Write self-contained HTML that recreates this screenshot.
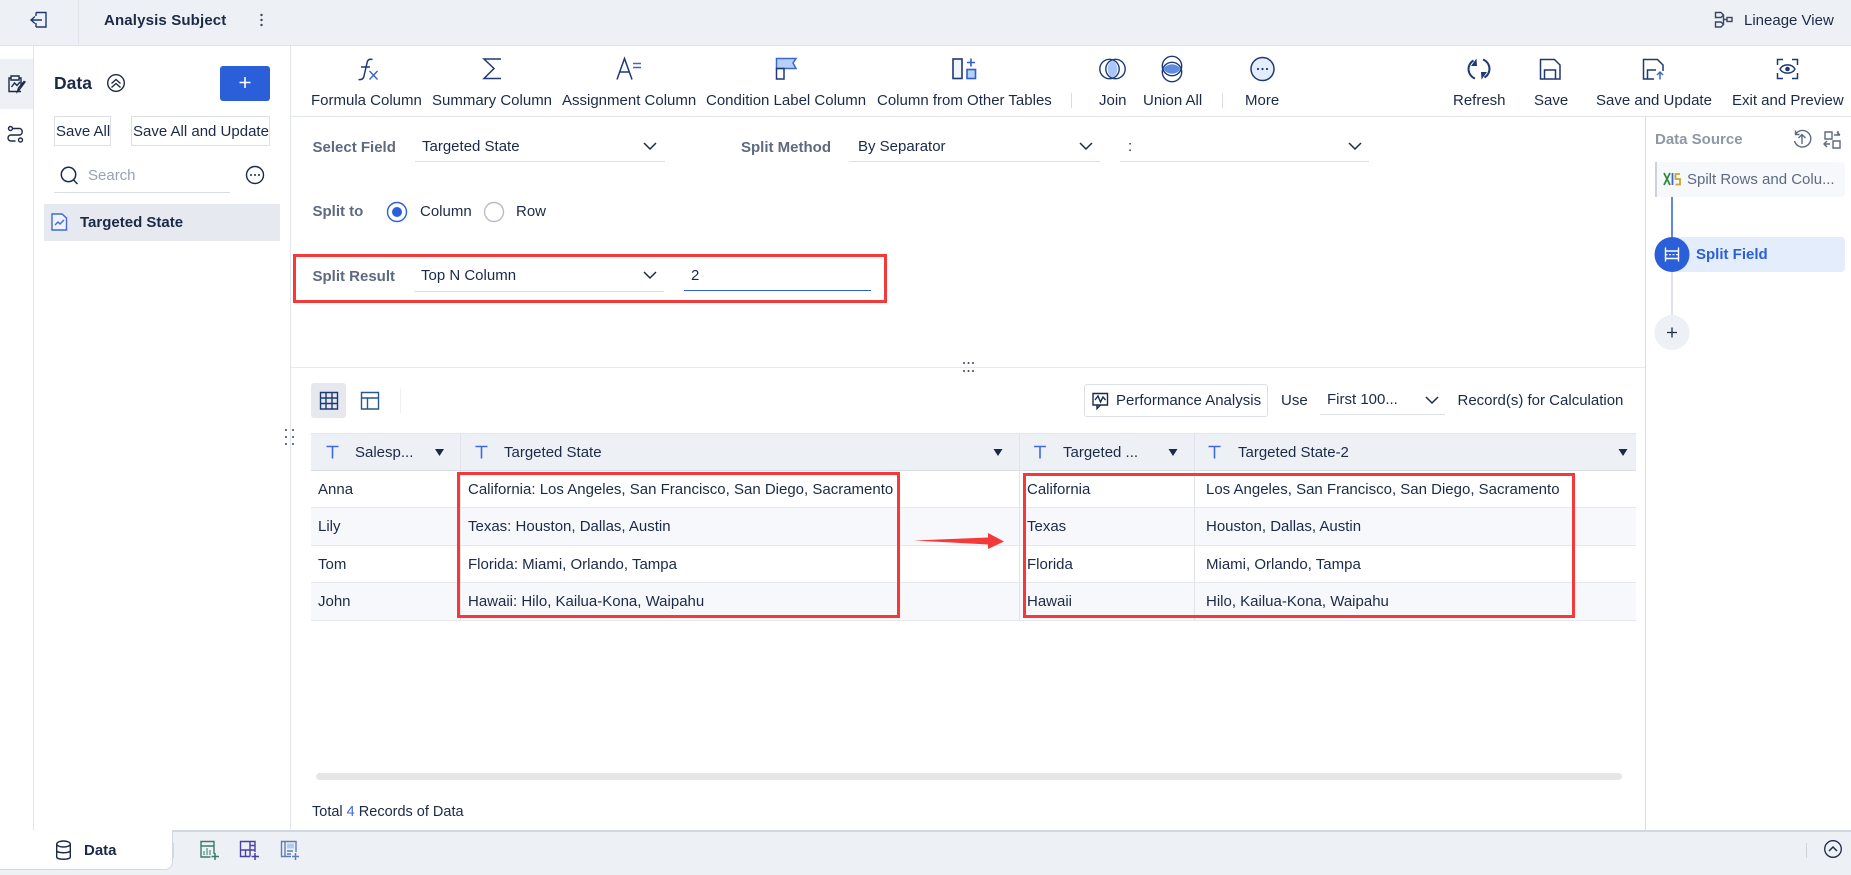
<!DOCTYPE html>
<html><head><meta charset="utf-8"><title>Analysis Subject</title>
<style>
html,body{margin:0;padding:0;width:1851px;height:875px;overflow:hidden;background:#fff}
body{position:relative;font-family:"Liberation Sans",Arial,sans-serif;font-size:15px;color:#1b2a47}
.t{position:absolute;line-height:20px;white-space:nowrap}
.b{font-weight:bold}
.l{font-weight:bold;color:#5d6a80;font-size:15px}
.r{position:absolute;box-sizing:border-box}
svg{position:absolute;left:0;top:0}
</style></head><body>
<!-- backgrounds -->
<div class="r" style="left:0;top:0;width:1851px;height:46px;background:#edf0f5;border-bottom:1px solid #e0e3ea"></div>
<div class="r" style="left:78px;top:0;width:1px;height:46px;background:#e0e3ea"></div>
<div class="r" style="left:0;top:59px;width:33px;height:50px;background:#edf0f5"></div>
<div class="r" style="left:33px;top:46px;width:1px;height:784px;background:#e3e5ec"></div>
<div class="r" style="left:290px;top:46px;width:1px;height:784px;background:#e3e5ec"></div>
<div class="r" style="left:291px;top:116px;width:1560px;height:1px;background:#e3e5ec"></div>
<div class="r" style="left:1645px;top:117px;width:1px;height:713px;background:#d9dce4"></div>
<div class="r" style="left:291px;top:367px;width:1354px;height:1px;background:#e6e8ee"></div>
<!-- header -->
<div class="t b" style="left:104px;top:11px;letter-spacing:.15px">Analysis Subject</div>
<div class="t" style="left:1744px;top:11px">Lineage View</div>
<!-- sidebar -->
<div class="t b" style="left:54px;top:73px;font-size:17.5px">Data</div>
<div class="r" style="left:220px;top:66px;width:50px;height:35px;background:#2b5fd9;border-radius:3px"></div>
<div class="r" style="left:54px;top:116px;width:57px;height:30px;border:1px solid #dcdfe6"></div>
<div class="t" style="left:56px;top:122px">Save All</div>
<div class="r" style="left:131px;top:116px;width:139px;height:30px;border:1px solid #dcdfe6"></div>
<div class="t" style="left:133px;top:122px">Save All and Update</div>
<div class="t" style="left:88px;top:166px;color:#9aa2b1">Search</div>
<div class="r" style="left:54px;top:192px;width:176px;height:1px;background:#d9dce4"></div>
<div class="r" style="left:44px;top:204px;width:236px;height:37px;background:#e6e9f0"></div>
<div class="t b" style="left:80px;top:213px;font-size:15px">Targeted State</div>
<!-- toolbar labels -->
<div class="t" style="left:311px;top:91px">Formula Column</div>
<div class="t" style="left:432px;top:91px">Summary Column</div>
<div class="t" style="left:562px;top:91px">Assignment Column</div>
<div class="t" style="left:706px;top:91px">Condition Label Column</div>
<div class="t" style="left:877px;top:91px">Column from Other Tables</div>
<div class="r" style="left:1071px;top:93px;width:1px;height:15px;background:#d9dce4"></div>
<div class="t" style="left:1099px;top:91px">Join</div>
<div class="t" style="left:1143px;top:91px">Union All</div>
<div class="r" style="left:1222px;top:93px;width:1px;height:15px;background:#d9dce4"></div>
<div class="t" style="left:1245px;top:91px">More</div>
<div class="t" style="left:1453px;top:91px">Refresh</div>
<div class="t" style="left:1534px;top:91px">Save</div>
<div class="t" style="left:1596px;top:91px">Save and Update</div>
<div class="t" style="left:1732px;top:91px">Exit and Preview</div>
<!-- form -->
<div class="t l" style="left:312.5px;top:138px">Select Field</div>
<div class="t" style="left:422px;top:137px">Targeted State</div>
<div class="r" style="left:415px;top:161px;width:250px;height:1px;background:#dcdfe6"></div>
<div class="t l" style="left:741px;top:138px">Split Method</div>
<div class="t" style="left:858px;top:137px">By Separator</div>
<div class="r" style="left:849px;top:161px;width:251px;height:1px;background:#dcdfe6"></div>
<div class="t" style="left:1128px;top:137px">:</div>
<div class="r" style="left:1120px;top:161px;width:249px;height:1px;background:#dcdfe6"></div>
<div class="t l" style="left:312.5px;top:202px">Split to</div>
<div class="t" style="left:420px;top:202px">Column</div>
<div class="t" style="left:516px;top:202px">Row</div>
<div class="t l" style="left:312.5px;top:267px">Split Result</div>
<div class="t" style="left:421px;top:266px">Top N Column</div>
<div class="r" style="left:414px;top:291px;width:250px;height:1px;background:#dcdfe6"></div>
<div class="t" style="left:691px;top:266px">2</div>
<div class="r" style="left:684px;top:290px;width:187px;height:1px;background:#2b5fd9"></div>
<!-- grid tools -->
<div class="r" style="left:311px;top:383px;width:35px;height:35px;background:#e6e8ee;border-radius:3px"></div>
<div class="r" style="left:400px;top:388px;width:1px;height:25px;background:#eef0f4"></div>
<div class="r" style="left:1084px;top:384px;width:184px;height:33px;border:1px solid #dcdfe6;border-radius:3px"></div>
<div class="t" style="left:1116px;top:391px">Performance Analysis</div>
<div class="t" style="left:1281px;top:391px">Use</div>
<div class="t" style="left:1327px;top:390px">First 100...</div>
<div class="r" style="left:1320px;top:414px;width:125px;height:1px;background:#dcdfe6"></div>
<div class="t" style="left:1457.5px;top:391px">Record(s) for Calculation</div>
<!-- table -->
<div class="r" style="left:311px;top:433px;width:1325px;height:38px;background:#edf0f5;border-top:1px solid #e3e6ec;border-bottom:1px solid #d9dce4"></div>
<div class="r" style="left:311px;top:508px;width:1325px;height:37px;background:#f7f8fc"></div>
<div class="r" style="left:311px;top:583px;width:1325px;height:37px;background:#f7f8fc"></div>
<div class="r" style="left:311px;top:507px;width:1325px;height:1px;background:#e6e8ee"></div>
<div class="r" style="left:311px;top:545px;width:1325px;height:1px;background:#e6e8ee"></div>
<div class="r" style="left:311px;top:582px;width:1325px;height:1px;background:#e6e8ee"></div>
<div class="r" style="left:311px;top:620px;width:1325px;height:1px;background:#e6e8ee"></div>
<div class="r" style="left:460px;top:433px;width:1px;height:188px;background:#e0e3ea"></div>
<div class="r" style="left:1019px;top:433px;width:1px;height:188px;background:#e0e3ea"></div>
<div class="r" style="left:1194px;top:433px;width:1px;height:188px;background:#e0e3ea"></div>
<div class="t" style="left:355px;top:443px">Salesp...</div>
<div class="t" style="left:504px;top:443px">Targeted State</div>
<div class="t" style="left:1063px;top:443px">Targeted ...</div>
<div class="t" style="left:1238px;top:443px">Targeted State-2</div>
<div class="t" style="left:318px;top:480px">Anna</div>
<div class="t" style="left:318px;top:517px">Lily</div>
<div class="t" style="left:318px;top:555px">Tom</div>
<div class="t" style="left:318px;top:592px">John</div>
<div class="t" style="left:468px;top:480px">California: Los Angeles, San Francisco, San Diego, Sacramento</div>
<div class="t" style="left:468px;top:517px">Texas: Houston, Dallas, Austin</div>
<div class="t" style="left:468px;top:555px">Florida: Miami, Orlando, Tampa</div>
<div class="t" style="left:468px;top:592px">Hawaii: Hilo, Kailua-Kona, Waipahu</div>
<div class="t" style="left:1027px;top:480px">California</div>
<div class="t" style="left:1027px;top:517px">Texas</div>
<div class="t" style="left:1027px;top:555px">Florida</div>
<div class="t" style="left:1027px;top:592px">Hawaii</div>
<div class="t" style="left:1206px;top:480px">Los Angeles, San Francisco, San Diego, Sacramento</div>
<div class="t" style="left:1206px;top:517px">Houston, Dallas, Austin</div>
<div class="t" style="left:1206px;top:555px">Miami, Orlando, Tampa</div>
<div class="t" style="left:1206px;top:592px">Hilo, Kailua-Kona, Waipahu</div>
<!-- red boxes -->
<div class="r" style="left:293px;top:254px;width:594px;height:49px;border:3px solid #f53838"></div>
<div class="r" style="left:457px;top:472px;width:443px;height:146px;border:3px solid #f53838"></div>
<div class="r" style="left:1023px;top:473px;width:552px;height:145px;border:3px solid #f53838"></div>
<!-- footer of table -->
<div class="r" style="left:316px;top:773px;width:1306px;height:7px;background:#e6e6e6;border-radius:4px"></div>
<div class="t" style="left:312px;top:802px;font-size:14.5px">Total <span style="color:#3f67d8">4</span> Records of Data</div>
<!-- right panel -->
<div class="t b" style="left:1655px;top:130px;color:#8f97a6;font-size:15px">Data Source</div>
<div class="r" style="left:1655px;top:162px;width:190px;height:35px;background:#f6f8fc;border-left:2px solid #cdd1da;border-radius:0 4px 4px 0"></div>
<div class="t" style="left:1687px;top:170px;color:#5d6a80">Spilt Rows and Colu...</div>
<div class="r" style="left:1672px;top:237px;width:173px;height:35px;background:#e4edfc;border-radius:0 4px 4px 0"></div>
<div class="t b" style="left:1696px;top:245px;color:#2b5fd9;font-size:15px">Split Field</div>
<!-- bottom -->
<div class="r" style="left:0;top:830px;width:1851px;height:45px;background:#edf0f5;border-top:2px solid #d3d7e0"></div>
<div class="r" style="left:-2px;top:830px;width:175px;height:40px;background:#fff;border:1px solid #d3d7e0;border-top:0;border-radius:0 0 8px 0"></div>
<div class="t b" style="left:84px;top:841px">Data</div>
<div class="r" style="left:173px;top:843px;width:1px;height:15px;background:#d3d7e0"></div>
<div class="r" style="left:1806px;top:843px;width:1px;height:15px;background:#cfd3dc"></div>

<svg width="1851" height="875" viewBox="0 0 1851 875" fill="none" stroke-width="1.4">
<!-- header icons -->
<g stroke="#1d3a75">
<path d="M36 12.5H46V27H36M36 12.5V16M36 27V23M42 20H31M35 16.5L31 20L35 23.5"/>
<path d="M1715.5 12.5H1721L1723.5 15L1721 17.5H1715.5ZM1715.5 22H1721L1723.5 24.5L1721 27H1715.5ZM1723.5 19.5H1727M1723.5 15V24.5" stroke="#3a4660"/>
<rect x="1727" y="17.5" width="5" height="4" stroke="#3a4660"/>
</g>
<g fill="#3a4660"><circle cx="261.500" cy="15" r="1.200"/><circle cx="261.500" cy="20" r="1.200"/><circle cx="261.500" cy="25" r="1.200"/></g>
<!-- rail icons -->
<g stroke="#1b2a47">
<path d="M11 78H9V91.500H21M21 86V78H19M11 76H19V80H11ZM11.500 87L14.500 83L17 85.500L20 82"/>
<path d="M25 82L19 90L17.500 91.500L18.500 88L24 81.500Z"/>
<circle cx="10.500" cy="128.500" r="2"/><path d="M12.500 128.500H20A3.500 3.500 0 0 1 20 135H11A3 3 0 0 0 11 141H15.500"/><circle cx="20.500" cy="140" r="2"/>
<!-- sidebar icons -->
<circle cx="116" cy="83" r="8.300"/><path d="M111.500 83.500L116 79.500L120.500 83.500M111.500 87.500L116 83.500L120.500 87.500"/>
<circle cx="68.500" cy="174.500" r="7.200" stroke-width="1.500"/><path d="M73.500 180L77.500 184" stroke-width="1.500"/>
<circle cx="255" cy="175" r="8.500"/>
</g>
<g fill="#1b2a47"><circle cx="251" cy="175" r="1"/><circle cx="255" cy="175" r="1"/><circle cx="259" cy="175" r="1"/></g>
<path d="M245 77V88M239.500 82.500H250.500" stroke="#fff" stroke-width="1.600"/>
<path d="M52 214H62L66.500 218V230H52Z" stroke="#3f6ad8" fill="#eef3fd"/><path d="M55 225L58 222L60 224L64 220" stroke="#3f6ad8"/>
<!-- toolbar icons -->
<path d="M372.500 59.500C369 58.500 367.500 60 367 63L364 76C363.500 79 361.500 80 358.500 79.500M361 67H370" stroke="#1d3a75" stroke-width="1.500"/>
<path d="M369.500 71L377.500 79.500M377.500 71L369.500 79.500" stroke="#3f67c8" stroke-width="1.500"/>
<path d="M501 59H484L494 68.500L484 78.500H501" stroke="#1d3a75" stroke-width="1.500"/>
<path d="M617 79.500L624.500 58.500L632 79.500M620 72H629.500" stroke="#1d3a75" stroke-width="1.500"/>
<path d="M633 63.500H641M633 67.500H641" stroke="#3f67c8" stroke-width="1.500"/>
<path d="M776.500 58.500H796L793 63L796 68.500H776.500Z" fill="#b5d0fb" stroke="#3a68c9" stroke-width="1.500"/>
<rect x="776.500" y="68.500" width="7.500" height="10.500" stroke="#1d3a75" stroke-width="1.500"/>
<rect x="953" y="59" width="9" height="19.500" fill="#eff5ff" stroke="#1d3a75" stroke-width="1.600"/>
<rect x="967" y="69.500" width="8.500" height="9" fill="#b5d0fb" stroke="#2f5fc9" stroke-width="1.600"/>
<path d="M971 58.500V66.500M967 62.500H975" stroke="#2f5fc9" stroke-width="1.600"/>
<!-- join -->
<path d="M1112.500 60.500A9.800 9.800 0 0 1 1112.500 77.500A9.800 9.800 0 0 1 1112.500 60.500Z" fill="#a9c7fa"/>
<circle cx="1109.500" cy="69" r="9.700" stroke="#1d3a75" stroke-width="1.400"/>
<circle cx="1115.500" cy="69" r="9.700" stroke="#1d3a75" stroke-width="1.400"/>
<!-- union -->
<path d="M1163.500 69A10 10 0 0 1 1180.500 69A10 10 0 0 1 1163.500 69Z" fill="#5e8ce0"/>
<circle cx="1172" cy="66" r="9.700" stroke="#1d3a75" stroke-width="1.400"/>
<circle cx="1172" cy="72" r="9.700" stroke="#1d3a75" stroke-width="1.400"/>
<!-- more -->
<circle cx="1262.500" cy="69" r="11.500" fill="#e4edfc" stroke="#1d3a75" stroke-width="1.500"/>
<g fill="#1d3a75"><circle cx="1258" cy="69" r="1.100"/><circle cx="1262.500" cy="69" r="1.100"/><circle cx="1267" cy="69" r="1.100"/></g>
<!-- refresh -->
<path d="M1473.500 60.500A10 10 0 0 0 1475 78.500M1484.500 77.500A10 10 0 0 0 1483 59.500" stroke="#1d3a75" stroke-width="2"/>
<path d="M1471 66L1476.500 58.500L1477 66ZM1487 72L1481.500 79.500L1481 72Z" fill="#1d3a75"/>
<!-- save -->
<path d="M1540.500 59.500H1554.500L1560 65V79H1540.500Z" stroke="#1d3a75" stroke-width="1.500"/>
<path d="M1544.500 79V70H1555.500V79" stroke="#1d3a75" stroke-width="1.500"/>
<!-- save and update -->
<path d="M1654 79H1643.500V59.500H1657.500L1663 65V71" stroke="#1d3a75" stroke-width="1.500"/>
<path d="M1647.500 79V70H1656" stroke="#1d3a75" stroke-width="1.500"/>
<path d="M1660 79.500V72.500M1657 75L1660 72L1663 75" stroke="#3f67c8" stroke-width="1.500"/>
<!-- exit preview -->
<path d="M1777.500 65V59.500H1783M1792 59.500H1797.500V65M1797.500 73V78.500H1792M1783 78.500H1777.500V73" stroke="#1d3a75" stroke-width="1.500"/>
<path d="M1780 69C1783 63.500 1792 63.500 1795 69C1792 74.500 1783 74.500 1780 69Z" stroke="#1d3a75" stroke-width="1.400"/>
<circle cx="1787.500" cy="69" r="2.300" fill="#1d3a75"/>
<!-- chevrons -->
<g stroke="#1b2a47" stroke-width="1.500">
<path d="M644 143L650 149L656 143M1080 143L1086 149L1092 143M1349 143L1355 149L1361 143M644 272L650 278L656 272M1426 397L1432 403L1438 397"/>
</g>
<!-- radios -->
<circle cx="397" cy="212" r="9.500" stroke="#2b5fd9"/><circle cx="397" cy="212" r="5" fill="#2b5fd9"/>
<circle cx="494" cy="212" r="9.500" stroke="#b9bec9"/>
<!-- divider dots -->
<g fill="#3a4660"><circle cx="964" cy="363" r="1"/><circle cx="968.500" cy="363" r="1"/><circle cx="973" cy="363" r="1"/><circle cx="964" cy="371" r="1"/><circle cx="968.500" cy="371" r="1"/><circle cx="973" cy="371" r="1"/>
<circle cx="286" cy="430" r="1"/><circle cx="293" cy="430" r="1"/><circle cx="286" cy="437" r="1"/><circle cx="293" cy="437" r="1"/><circle cx="286" cy="444" r="1"/><circle cx="293" cy="444" r="1"/></g>
<!-- grid icons -->
<g stroke="#1d3a75">
<path d="M320.500 392.500H337.500V409H320.500ZM326 392.500V409M332 392.500V409M320.500 398H337.500M320.500 403.500H337.500"/>
<path d="M361.500 392.500H378.500V409H361.500ZM361.500 398H378.500M367.500 398V409" stroke="#27588f"/>
<path d="M1093 393.500H1107.500V405H1093ZM1095 400L1098 396L1100.500 402L1103 397L1105.500 400" stroke="#1b2a47"/>
<path d="M1097 405V408.500L1100.500 405" stroke="#1b2a47"/>
</g>
<!-- T icons -->
<g stroke="#4169d8" stroke-width="1.600">
<path d="M326.500 446.500H338.500M332.500 446.500V458.500M475.500 446.500H487.500M481.500 446.500V458.500M1034 446.500H1046M1040 446.500V458.500M1208.500 446.500H1220.500M1214.500 446.500V458.500"/>
</g>
<!-- triangles -->
<g fill="#1b2a47"><path d="M435 449H444L439.500 456ZM993.500 449H1002.500L998 456ZM1168.500 449H1177.500L1173 456ZM1618.500 449H1627.500L1623 456Z"/></g>
<!-- arrow -->
<path d="M914 540.500L988 537.500V533L1004 541.500L988 549V544.500Z" fill="#f53838"/>
<!-- right panel icons -->
<g stroke="#5d6a80">
<path d="M1796 133.500A8.300 8.300 0 1 1 1794.500 141M1795.500 130.500V134.500H1799.500M1802 144V135M1798.500 138L1802 134.500L1805.500 138"/>
<path d="M1825 132H1832V139H1825ZM1833 141H1840V148H1833ZM1834 135H1840M1837 132L1840 135M1838 131V135M1824 144H1830M1827 141L1824 144L1827 147"/>
</g>
<path d="M1664 173L1670 185M1670 173L1664 185" stroke="#2e8a3c" stroke-width="1.800"/>
<path d="M1672.500 173V185" stroke="#3f67c8" stroke-width="1.800"/>
<path d="M1680 174H1675.500V179H1680V184.500H1675.500" stroke="#c7a72e" stroke-width="1.800"/>
<path d="M1672 197V237" stroke="#2b5fd9" stroke-width="1.500"/>
<path d="M1672 272V315" stroke="#d5d9e2" stroke-width="1.500"/>
<circle cx="1672" cy="254.500" r="17.500" fill="#2b5fd9"/>
<path d="M1665.500 247.500V261.500M1678.500 247.500V261.500M1665.500 251H1678.500M1665.500 258.500H1678.500" stroke="#fff" stroke-width="1.400"/>
<path d="M1665.500 254.700H1678.500" stroke="#fff" stroke-width="1.200" stroke-dasharray="2 1.500"/>
<circle cx="1672" cy="332.500" r="17.500" fill="#edf0f5"/>
<path d="M1672 327.500V337.500M1667 332.500H1677" stroke="#1b2a47" stroke-width="1.300"/>
<!-- bottom icons -->
<g stroke="#1b2a47" stroke-width="1.400">
<ellipse cx="63.500" cy="844" rx="6.800" ry="3"/>
<path d="M56.700 844V857C56.700 860 70.300 860 70.300 857V844M56.700 850.500C56.700 853.500 70.300 853.500 70.300 850.500"/>
</g>
<g stroke="#3b7a6e"><path d="M214 854V841.500H201V857H210.500M201 846H214" /><path d="M204 855V851M207 855V848M210 855V850" stroke="#5aa592"/><path d="M215 853V860M211.500 856.500H219" stroke-width="1.500"/></g>
<g stroke="#4a3fa8"><path d="M255 852V841.500H240.500V856.500H250M240.500 850H255M250 841.500V856.500M245.500 850V856.500M250 845.500H255"/><path d="M255 853V860M251.500 856.500H259" stroke-width="1.500"/></g>
<g stroke="#5e7db5"><path d="M296 852V841.500H281.500V856.500H291M285 841.500V856.500"/><rect x="287" y="843.500" width="7" height="5" fill="#b5c9ee" stroke="none"/><path d="M287 851H293M287 854H291"/><path d="M295.500 853V860M292 856.500H299" stroke-width="1.500"/></g>
<circle cx="1833" cy="849" r="8.300" stroke="#1b2a47" stroke-width="1.300"/>
<path d="M1829 851L1833 847L1837 851" stroke="#1b2a47" stroke-width="1.500"/>
</svg>
</body></html>
